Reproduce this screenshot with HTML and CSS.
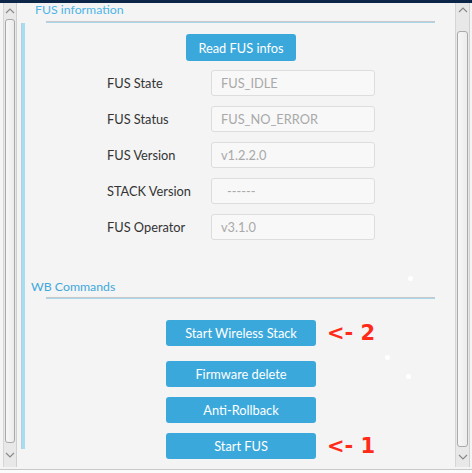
FILE: index.html
```html
<!DOCTYPE html>
<html>
<head>
<meta charset="utf-8">
<link rel="stylesheet" href="styles.css">
</head>
<body>
<div class="topbar"></div>
<div class="app">
  <div class="sb sb-left">
    <div class="sb-up up-left"><svg width="10" height="6" viewBox="0 0 10 6"><polyline points="1,5 5,1 9,5" class="chev"/></svg></div>
    <div class="thumb"></div>
    <div class="sb-down down-left"><svg width="10" height="6" viewBox="0 0 10 6"><polyline points="1,1 5,5 9,1" class="chev"/></svg></div>
  </div>
  <div class="main">
    <div class="title title-fus">FUS information</div>
    <div class="sep"></div>
    <div class="panel">
      <div class="rail"></div>
      <div class="pcontent">
        <div class="btn btn-read">Read FUS infos</div>
        <div class="rows">
          <div class="label">FUS State</div><div class="field">FUS_IDLE</div>
          <div class="label">FUS Status</div><div class="field">FUS_NO_ERROR</div>
          <div class="label">FUS Version</div><div class="field">v1.2.2.0</div>
          <div class="label">STACK Version</div><div class="field field-indent">------</div>
          <div class="label">FUS Operator</div><div class="field">v3.1.0</div>
        </div>
        <div class="title title-wb">WB Commands</div>
        <div class="sep sep-wb"></div>
        <div class="cmds">
          <div class="cmd cmd-first"><div class="btn btn-cmd">Start Wireless Stack</div><div class="note">&lt;- 2</div></div>
          <div class="cmd"><div class="btn btn-cmd">Firmware delete</div></div>
          <div class="cmd"><div class="btn btn-cmd">Anti-Rollback</div></div>
          <div class="cmd"><div class="btn btn-cmd">Start FUS</div><div class="note">&lt;- 1</div></div>
        </div>
      </div>
    </div>
    <div class="dot dot1"></div>
    <div class="dot dot2"></div>
    <div class="dot dot3"></div>
  </div>
  <div class="sb sb-right">
    <div class="sb-up up-right"><svg width="10" height="6" viewBox="0 0 10 6"><polyline points="1,5 5,1 9,5" class="chev"/></svg></div>
    <div class="thumb"></div>
    <div class="sb-down down-right"><svg width="10" height="6" viewBox="0 0 10 6"><polyline points="1,1 5,5 9,1" class="chev"/></svg></div>
  </div>
</div>
<div class="footer"></div>
</body>
</html>
```
FILE: styles.css
```css
html, body {
  margin: 0;
  padding: 0;
}
body {
  width: 472px;
  height: 473px;
  overflow: hidden;
  background: #f4f4f4;
  font-family: Lato, "Liberation Sans", sans-serif;
}
.topbar {
  height: 3px;
  background: #0c2648;
}
.app {
  display: flex;
  height: 466px;
}
.sb {
  box-sizing: border-box;
  display: flex;
  flex-direction: column;
  background: #e8e8e8;
  border-left: 1px solid #d6d6d6;
  border-right: 1px solid #d0d0d0;
  height: 464px;
}
.sb-left {
  margin-left: 3px;
  width: 14px;
}
.sb-right {
  width: 15px;
  margin-right: 2px;
}
.sb-up, .sb-down {
  display: flex;
  justify-content: center;
  align-items: center;
}
.up-left { height: 16px; }
.down-left { height: 24px; }
.up-right { height: 28px; align-items: flex-start; padding-top: 4px; box-sizing: border-box; }
.down-right { height: 20px; }
.chev {
  fill: none;
  stroke: #8a8a8a;
  stroke-width: 1.2;
}
.thumb {
  flex: 1;
  margin: 0 1px;
  border: 1px solid #a9a9a9;
  border-radius: 3px;
  background: linear-gradient(to right, #f6f6f6, #ececec);
}
.main {
  flex: 1;
  position: relative;
  padding-left: 4px;
}
.title {
  font-size: 12.3px;
  line-height: 14px;
  color: #4fb4e6;
}
.title-fus {
  margin-left: 14px;
}
.sep {
  margin-top: 4px;
  margin-left: 25px;
  width: 389px;
  height: 0;
  border-top: 1px solid #c8c8c8;
  border-bottom: 1px solid #a7d7e8;
}
.panel {
  display: flex;
  align-items: flex-start;
}
.rail {
  width: 4px;
  height: 426px;
  flex: none;
  background: linear-gradient(to right, #b4d0da 1px, #a8dcf0 1px);
}
.pcontent {
  flex: 1;
}
.btn {
  box-sizing: border-box;
  background: #3ba8dc;
  color: #ffffff;
  border-radius: 3px;
  font-size: 12.8px;
  display: flex;
  align-items: center;
  justify-content: center;
}
.btn-read {
  margin-top: 11px;
  margin-left: 161px;
  width: 110px;
  height: 27px;
}
.rows {
  margin-top: 9px;
  margin-left: 82px;
  display: grid;
  grid-template-columns: 104px 164px;
  grid-auto-rows: 26px;
  row-gap: 10px;
}
.label {
  font-size: 12.8px;
  color: #333333;
  display: flex;
  align-items: center;
}
.field {
  box-sizing: border-box;
  border: 1px solid #dddddd;
  border-radius: 3px;
  background: #f8f8f8;
  color: #a9a9a9;
  font-size: 12.8px;
  padding-left: 9px;
  display: flex;
  align-items: center;
}
.field-indent {
  padding-left: 15px;
}
.title-wb {
  margin-top: 40px;
  margin-left: 6px;
  color: #40a8dc;
}
.sep-wb {
  margin-top: 3px;
  margin-left: 21px;
}
.cmds {
  margin-top: 21px;
  margin-left: 141px;
  display: flex;
  flex-direction: column;
  gap: 10px;
}
.cmd {
  display: flex;
  align-items: center;
  height: 26px;
}
.cmd-first {
  margin-bottom: 5px;
}
.btn-cmd {
  width: 150px;
  height: 26px;
}
.note {
  margin-left: 11px;
  font-family: "DejaVu Sans", sans-serif;
  font-weight: bold;
  font-size: 21px;
  color: #ff2a17;
  white-space: pre;
}
.dot {
  position: absolute;
  width: 5px;
  height: 5px;
  border-radius: 50%;
  background: #ffffff;
}
.dot1 { left: 391px; top: 273px; }
.dot2 { left: 368px; top: 352px; }
.dot3 { left: 389px; top: 371px; }
.footer {
  height: 3px;
  border-top: 1px solid #c8c8c8;
  background: #fbfbfb;
}
```
